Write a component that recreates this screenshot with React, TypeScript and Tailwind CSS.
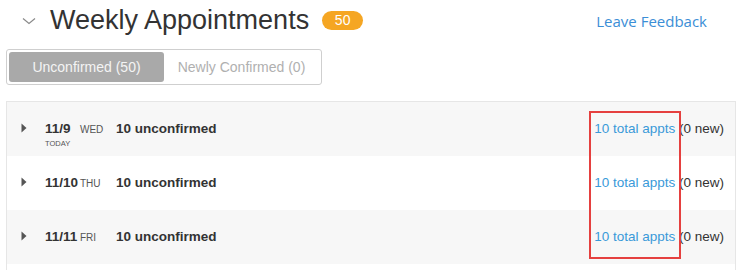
import React from 'react'

interface DayRow {
    date: string
    day: string
    today?: boolean
}

const rows: DayRow[] = [
    { date: '11/9', day: 'WED', today: true },
    { date: '11/10', day: 'THU' },
    { date: '11/11', day: 'FRI' },
]

function ChevronDown() {
    return (
        <svg width="14" height="8" viewBox="0 0 14 8" className="block">
            <path d="M1 1.5 L7 6.5 L13 1.5" fill="none" stroke="#8a8a8a" strokeWidth="1.2" />
        </svg>
    )
}

function Caret() {
    return (
        <svg width="6" height="10" viewBox="0 0 6 10" className="block">
            <path d="M0.5 0.5 L5.5 5 L0.5 9.5 Z" fill="#555" />
        </svg>
    )
}

export default function App() {
    return (
        <div className="relative w-[741px] h-[270px] overflow-hidden bg-white font-['Liberation_Sans',Arial,sans-serif] text-[#333]">
            {/* header */}
            <div className="flex items-center h-[40px] pr-[34px]">
                <div className="w-[50px] pl-[22px] pt-[1px]">
                    <ChevronDown />
                </div>
                <h1 className="text-[27px] leading-[40px] text-[#333] font-normal">Weekly Appointments</h1>
                <span className="ml-[13px] mt-[1px] h-[19px] w-[41px] rounded-full bg-[#f5a623] text-white text-[14px] leading-[19px] text-center">
                    50
                </span>
                <a className="ml-auto mt-[2px] font-['Open_Sans',sans-serif] text-[15px] text-[#3b8ed6]">Leave Feedback</a>
            </div>

            {/* tabs */}
            <div className="mt-[9px] ml-[6px] w-[316px] p-[2px] border border-[#cfcfcf] rounded-[3px] grid grid-cols-2">
                <div className="h-[30px] rounded-[3px] bg-[#a9a9a9] text-[#f4f4f4] text-[14px] leading-[30px] text-center">
                    Unconfirmed (50)
                </div>
                <div className="h-[30px] text-[#b0b0b0] text-[14px] leading-[30px] text-center">Newly Confirmed (0)</div>
            </div>

            {/* day list */}
            <div className="mt-[16px] ml-[6px] w-[730px] border-l border-t border-r border-[#e6e6e6]">
                {[...rows, { date: '', day: '' }].map((r, i) => (
                    <div
                        key={i}
                        className={`h-[54px] flex items-start pt-[19px] pl-[14px] pr-[11px] ${i % 2 === 0 ? 'bg-[#f7f7f7]' : 'bg-white'}`}
                    >
                        {r.date && (
                            <>
                                <div className="w-[24px] pt-[2px]">
                                    <Caret />
                                </div>
                                <div className="w-[71px]">
                                    <div className="flex items-baseline leading-[16px]">
                                        <span className="w-[35px] text-[13.5px] font-bold">{r.date}</span>
                                        <span className="text-[10px] text-[#555]">{r.day}</span>
                                    </div>
                                    {r.today && <div className="mt-[2px] text-[7.5px] leading-[8px] text-[#555]">TODAY</div>}
                                </div>
                                <span className="text-[13.5px] leading-[16px] font-bold">10 unconfirmed</span>
                                <span className="ml-auto text-[13.5px] leading-[16px]">
                                    <a className="text-[#3a9ad9]">10 total appts</a> (0 new)
                                </span>
                            </>
                        )}
                    </div>
                ))}
            </div>

            {/* annotation box */}
            <div className="absolute left-[589px] top-[111px] w-[92px] h-[148px] border-2 border-[#e5403f]" />
        </div>
    )
}
